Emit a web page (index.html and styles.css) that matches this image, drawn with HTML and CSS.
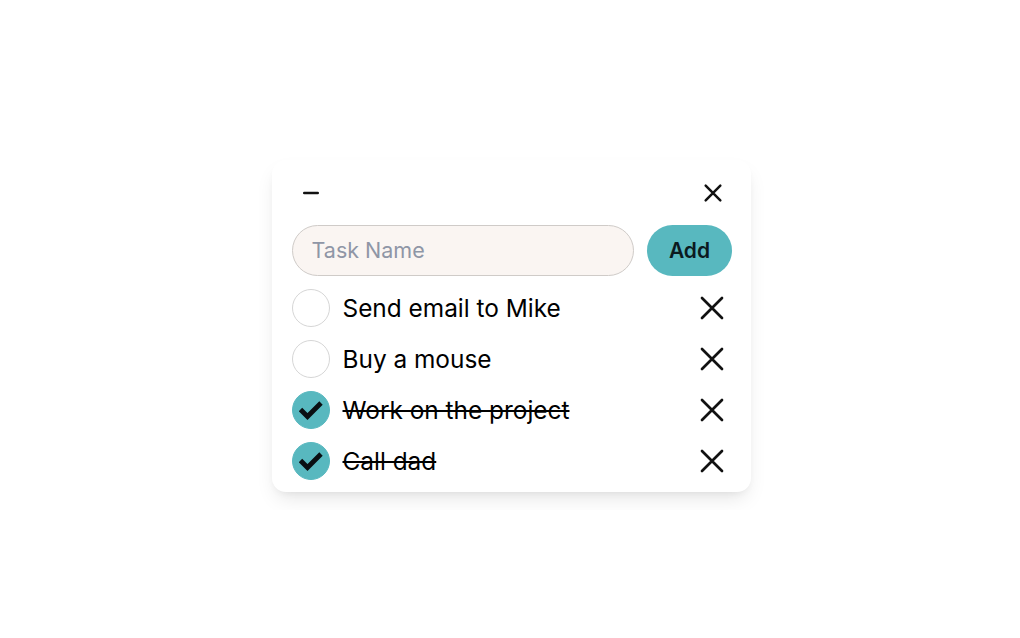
FILE: index.html
```html
<!DOCTYPE html>
<html lang="en">
<head>
    <meta charset="UTF-8">
    <meta name="viewport" content="width=device-width, initial-scale=1.0">
    <link rel="stylesheet" href="styles.css">
    <title>Tasks</title>
</head>
<body>
    <div class="stage">
        <div class="todo">
            <div class="todo__bar">
                <button class="icon-btn" aria-label="Minimize">
                    <svg class="icon-small" viewBox="0 0 24 24"><path d="M4.600 12h14.800"/></svg>
                </button>
                <button class="icon-btn" aria-label="Close">
                    <svg class="icon-small" viewBox="0 0 24 24"><path d="M4 4l16 16M20 4L4 20"/></svg>
                </button>
            </div>

            <form class="todo__form">
                <input class="todo__input" type="text" placeholder="Task Name">
                <button class="todo__add" type="button">Add</button>
            </form>

            <ul class="todo__list">
                <li class="task">
                    <span class="task__check"></span>
                    <span class="task__name">Send email to Mike</span>
                    <button class="icon-btn" aria-label="Delete">
                        <svg class="icon-large" viewBox="0 0 24 24"><path d="M2 2l20 20M22 2L2 22"/></svg>
                    </button>
                </li>
                <li class="task">
                    <span class="task__check"></span>
                    <span class="task__name">Buy a mouse</span>
                    <button class="icon-btn" aria-label="Delete">
                        <svg class="icon-large" viewBox="0 0 24 24"><path d="M2 2l20 20M22 2L2 22"/></svg>
                    </button>
                </li>
                <li class="task task--done">
                    <span class="task__check">
                        <svg class="tick" viewBox="0 0 24 24"><path d="M1.500 11.500l7 7L22 5"/></svg>
                    </span>
                    <span class="task__name">Work on the project</span>
                    <button class="icon-btn" aria-label="Delete">
                        <svg class="icon-large" viewBox="0 0 24 24"><path d="M2 2l20 20M22 2L2 22"/></svg>
                    </button>
                </li>
                <li class="task task--done">
                    <span class="task__check">
                        <svg class="tick" viewBox="0 0 24 24"><path d="M1.500 11.500l7 7L22 5"/></svg>
                    </span>
                    <span class="task__name">Call dad</span>
                    <button class="icon-btn" aria-label="Delete">
                        <svg class="icon-large" viewBox="0 0 24 24"><path d="M2 2l20 20M22 2L2 22"/></svg>
                    </button>
                </li>
            </ul>
        </div>
    </div>
</body>
</html>
```

FILE: styles.css
```css
*{box-sizing: border-box; font-family: "Inter", "Liberation Sans", sans-serif;}

body{margin: 0; background: #fff;}

/* the shadow is cut off flat under the card in the reference */
.stage{height: 510px; padding: 160px 0 0 272px; overflow: hidden;}

.todo{width: 479px; height: 332px; padding: 16px 19px 12px 20px; background: #fff; border-radius: 14px; box-shadow: 0 10px 20px -4px rgba(0, 0, 0, 0.1), 0 4px 8px -4px rgba(0, 0, 0, 0.08);}

.todo__bar{height: 34px; display: flex; justify-content: space-between; align-items: center; padding: 0 8.5px 0 8px;}

.todo__form{display: flex; gap: 13px; margin-top: 15px;}
.todo__input{width: 342px; height: 51px; padding: 0 19px 2px 18.5px; background: #faf5f2; border: 1.5px solid #cfcbc8; border-radius: 26px; font-size: 21.5px; color: #111; outline: none;}
.todo__input::placeholder{color: #8f96a6; opacity: 1;}
.todo__add{width: 85px; height: 51px; padding: 0; border: 0; border-radius: 26px; background: #58b8bf; color: #0c1a1f; font-size: 21px; font-weight: 600; cursor: pointer;}

.todo__list{list-style: none; margin: 13px 0 0; padding: 0; display: flex; flex-direction: column; gap: 13px;}

.task{height: 38px; display: flex; align-items: center; padding-right: 8px;}
.task__check{width: 38px; height: 38px; flex: none; display: flex; align-items: center; justify-content: center; border: 1.5px solid #d6d6d6; border-radius: 50%;}
.task__name{flex: 1; margin-left: 12.5px; font-size: 24.4px; color: #000;}

.task--done .task__check{background: #58b8bf; border-color: #58b8bf;}
.task--done .task__name{text-decoration: line-through; text-decoration-thickness: 2px;}

.icon-btn{padding: 0; border: 0; background: none; display: flex; cursor: pointer;}
.icon-small{width: 22px; height: 22px;}
.icon-large{width: 24px; height: 24px;}
.icon-small path, .icon-large path{fill: none; stroke: #111; stroke-width: 2.7; stroke-linecap: round;}

.tick{width: 24px; height: 24px;}
.tick path{fill: none; stroke: #0a0f12; stroke-width: 4.8;}
```
